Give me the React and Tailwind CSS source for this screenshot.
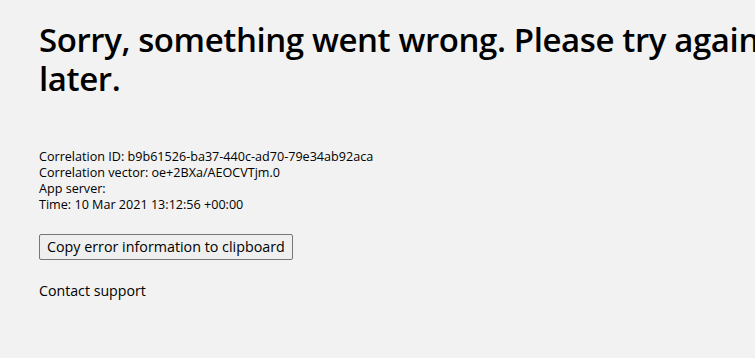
import React from 'react'

const details = [
  'Correlation ID: b9b61526-ba37-440c-ad70-79e34ab92aca',
  'Correlation vector: oe+2BXa/AEOCVTjm.0',
  'App server:',
  'Time: 10 Mar 2021 13:12:56 +00:00'
]

const App = () => {
  return (
    <div className="h-[358px] w-[755px] overflow-hidden bg-[#f2f2f2] text-black font-['Open_Sans',sans-serif]">
      <div className="w-[780px] pl-[39px] pt-[20px]">
        <h1 className="text-[33px] leading-[39px] font-semibold tracking-[-0.4px]">
          Sorry, something went wrong. Please try again later.
        </h1>

        <div className="mt-[51px] text-[12.6px] leading-[16px]">
          {details.map((line) => (
            <div key={line}>{line}</div>
          ))}
        </div>

        <button className="mt-[21px] h-[26px] rounded-[2px] border border-[#767676] bg-[#efefef] px-[7px] text-[14.3px] leading-[20px]">
          Copy error information to clipboard
        </button>

        <div className="mt-[21px] text-[14.2px] leading-[20px]">Contact support</div>
      </div>
    </div>
  )
}

export default App
